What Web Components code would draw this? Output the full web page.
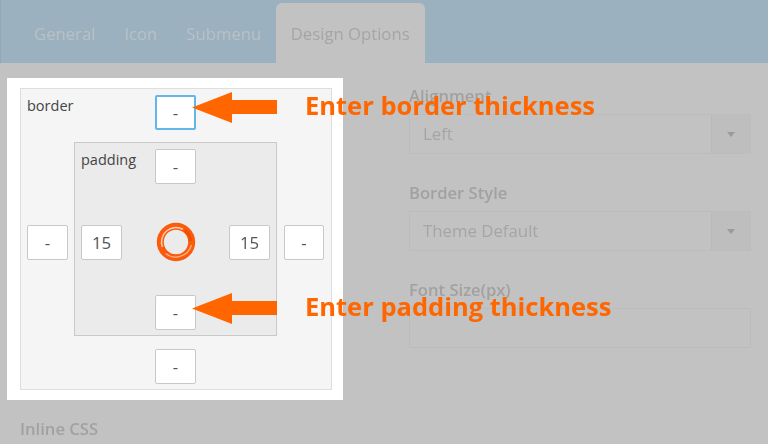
<!DOCTYPE html>
<html>
<head>
<meta charset="utf-8">
<title>Design Options</title>
<style>
html, body { margin: 0; padding: 0; }
body {
    width: 768px;
    height: 444px;
    overflow: hidden;
    position: relative;
    background: #c2c2c2;
    font-family: "Open Sans", sans-serif;
}
body > * { filter: blur(.4px); }
</style>
</head>
<body>
<tab-bar>
    <tab-item>General</tab-item>
    <tab-item>Icon</tab-item>
    <tab-item>Submenu</tab-item>
    <tab-item active>Design Options</tab-item>
</tab-bar>

<options-pane>
    <box-editor slot="left"></box-editor>
    <form-label slot="left" class="css">Inline CSS</form-label>

    <form-field slot="right" label="Alignment"><select-box>Left</select-box></form-field>
    <form-field slot="right" label="Border Style"><select-box>Theme Default</select-box></form-field>
    <form-field slot="right" label="Font Size(px)"><text-box></text-box></form-field>
</options-pane>

<callout-arrow style="top: 92px">Enter border thickness</callout-arrow>
<callout-arrow style="top: 293px">Enter padding thickness</callout-arrow>

<script>
class BaseElement extends HTMLElement {
    constructor() {
        super();
        this.attachShadow({ mode: 'open' });
    }

    render() {
        return '';
    }

    connectedCallback() {
        this.shadowRoot.innerHTML = `<style>${this.constructor.styles}</style>${this.render()}`;
    }
}

class TabBar extends BaseElement {
    static get styles() {
        return `
        :host {
            display: flex;
            align-items: flex-end;
            height: 60px;
            padding: 3px 0 0 18.5px;
            background: #9bb1c0;
            border-left: 1px solid #8fa9ba;
        }
        `;
    }

    render() {
        return `<slot></slot>`;
    }
}

class TabItem extends BaseElement {
    static get styles() {
        return `
        :host {
            display: block;
            height: 60px;
            padding: 0 14.5px;
            font: 16.7px/61px "Open Sans", sans-serif;
            color: #b9c1c5;
        }
        :host([active]) {
            padding: 0 15px;
            background: #c2c2c2;
            color: #a5a5a5;
            border-radius: 6px 6px 0 0;
        }
        `;
    }

    render() {
        return `<slot></slot>`;
    }
}

class OptionsPane extends BaseElement {
    static get styles() {
        return `
        :host {
            display: grid;
            grid-template-columns: 336px 342px;
            column-gap: 66px;
            padding: 15px 0 0 7px;
        }
        .col { display: flex; flex-direction: column; }
        .right { padding-top: 8px; gap: 29px; }
        `;
    }

    render() {
        return `<div class="col"><slot name="left"></slot></div>
                <div class="col right"><slot name="right"></slot></div>`;
    }
}

class BoxEditor extends BaseElement {
    static get styles() {
        return `
        :host {
            display: block;
            width: 336px;
            height: 322px;
            padding: 10px 11px 10px 13px;
            box-sizing: border-box;
            background: #fff;
        }
        .outer, .inner {
            display: grid;
            box-sizing: border-box;
            justify-items: center;
            align-items: center;
            border: 1px solid #dedede;
        }
        .outer {
            width: 312px;
            height: 302px;
            padding: 6px;
            background: #f5f5f5;
            grid-template-columns: 41px 204px 40px;
            grid-template-rows: 34px 194px 34px;
            column-gap: 6px;
            row-gap: 13px;
        }
        .inner {
            justify-self: start;
            width: 203px;
            height: 194px;
            padding: 6px;
            background: #ebebeb;
            border-color: #c9c9c9;
            grid-template-columns: 41px 1fr 41px;
            grid-template-rows: 34px 1fr 34px;
        }
        .label {
            justify-self: start;
            align-self: start;
            margin-top: 1px;
            white-space: nowrap;
            font: 14.5px/20px "Open Sans", sans-serif;
            color: #444;
        }
        .mid { margin-top: 6px; }
        .center { justify-self: start; margin-left: 81px; }
        .ring { width: 40px; height: 40px; display: block; margin-top: 5px; }
        `;
    }

    render() {
        return `
        <div class="outer">
            <span class="label">border</span>
            <value-box class="center" focused>-</value-box>
            <span></span>
            <value-box class="mid">-</value-box>
            <div class="inner">
                <span class="label">padding</span>
                <value-box>-</value-box>
                <span></span>
                <value-box class="mid">15</value-box>
                <svg class="ring" viewBox="0 0 40 40">
                    <circle cx="20" cy="20" r="15.7" fill="none" stroke="#fb5b0c" stroke-width="7"/>
                    <path d="M6.4 25 A14.5 14.5 0 0 1 27 7.3" fill="none" stroke="#fdc9ac" stroke-width="1.6"/>
                    <path d="M9.5 31.5 A16.5 16.5 0 0 0 35.5 23" fill="none" stroke="#fdb38a" stroke-width="1.2"/>
                    <path d="M29 8 A15 15 0 0 1 34.5 19" fill="none" stroke="#ef4d00" stroke-width="3"/>
                </svg>
                <value-box class="mid">15</value-box>
                <span></span>
                <value-box>-</value-box>
                <span></span>
            </div>
            <value-box class="mid" style="width: 40px">-</value-box>
            <span></span>
            <value-box class="center">-</value-box>
            <span></span>
        </div>`;
    }
}

class ValueBox extends BaseElement {
    static get styles() {
        return `
        :host {
            display: flex;
            align-items: center;
            justify-content: center;
            width: 41px;
            height: 35px;
            box-sizing: border-box;
            background: #fff;
            border: 1px solid #c8c8c8;
            border-radius: 2px;
            font: 16.8px "Open Sans", sans-serif;
            color: #555;
        }
        :host([focused]) { border: 2px solid #62b7e8; }
        `;
    }

    render() {
        return `<slot></slot>`;
    }
}

class FormLabel extends BaseElement {
    static get styles() {
        return `
        :host {
            display: block;
            font: 600 16.6px/22px "Open Sans", sans-serif;
            color: #a3a1a0;
        }
        :host(.css) { margin: 18px 0 0 13px; }
        `;
    }

    render() {
        return `<slot></slot>`;
    }
}

class FormField extends BaseElement {
    static get styles() {
        return `
        :host { display: block; }
        .label {
            font: 600 16.6px/20px "Open Sans", sans-serif;
            color: #a3a1a0;
            height: 28px;
        }
        `;
    }

    render() {
        return `<div class="label">${this.getAttribute('label')}</div><slot></slot>`;
    }
}

class SelectBox extends BaseElement {
    static get styles() {
        return `
        :host {
            display: flex;
            height: 40px;
            box-sizing: border-box;
            border: 1px solid #bcbcbc;
            font: 16.8px "Open Sans", sans-serif;
            color: #a5a5a5;
        }
        .value { flex: 1; padding-left: 13px; line-height: 38px; }
        .caret {
            width: 38px;
            display: flex;
            align-items: center;
            justify-content: center;
            background: #bebebe;
            border-left: 1px solid #bababa;
        }
        .caret i {
            width: 0;
            height: 0;
            border: 4.5px solid transparent;
            border-top: 5px solid #9a9a9a;
            border-bottom: 0;
        }
        `;
    }

    render() {
        return `<div class="value"><slot></slot></div><div class="caret"><i></i></div>`;
    }
}

class TextBox extends BaseElement {
    static get styles() {
        return `
        :host {
            display: block;
            height: 40px;
            box-sizing: border-box;
            border: 1px solid #bcbcbc;
        }
        `;
    }
}

// arrow + caption drawn on top of the screenshot
class CalloutArrow extends BaseElement {
    static get styles() {
        return `
        :host {
            position: absolute;
            left: 192px;
            display: flex;
            align-items: center;
            height: 32px;
            gap: 28px;
            font: 700 25.5px/26px "Open Sans", sans-serif;
            color: #ff6600;
            white-space: nowrap;
        }
        svg { width: 85px; height: 32px; display: block; }
        span { margin-top: -6px; }
        `;
    }

    render() {
        return `<svg viewBox="0 0 85 32"><path d="M0 15.5 L40 0 V8 H85 V22 H40 V31 Z" fill="#ff6600"/></svg><span><slot></slot></span>`;
    }
}

customElements.define('tab-bar', TabBar);
customElements.define('tab-item', TabItem);
customElements.define('options-pane', OptionsPane);
customElements.define('box-editor', BoxEditor);
customElements.define('value-box', ValueBox);
customElements.define('form-label', FormLabel);
customElements.define('form-field', FormField);
customElements.define('select-box', SelectBox);
customElements.define('text-box', TextBox);
customElements.define('callout-arrow', CalloutArrow);
</script>
</body>
</html>
